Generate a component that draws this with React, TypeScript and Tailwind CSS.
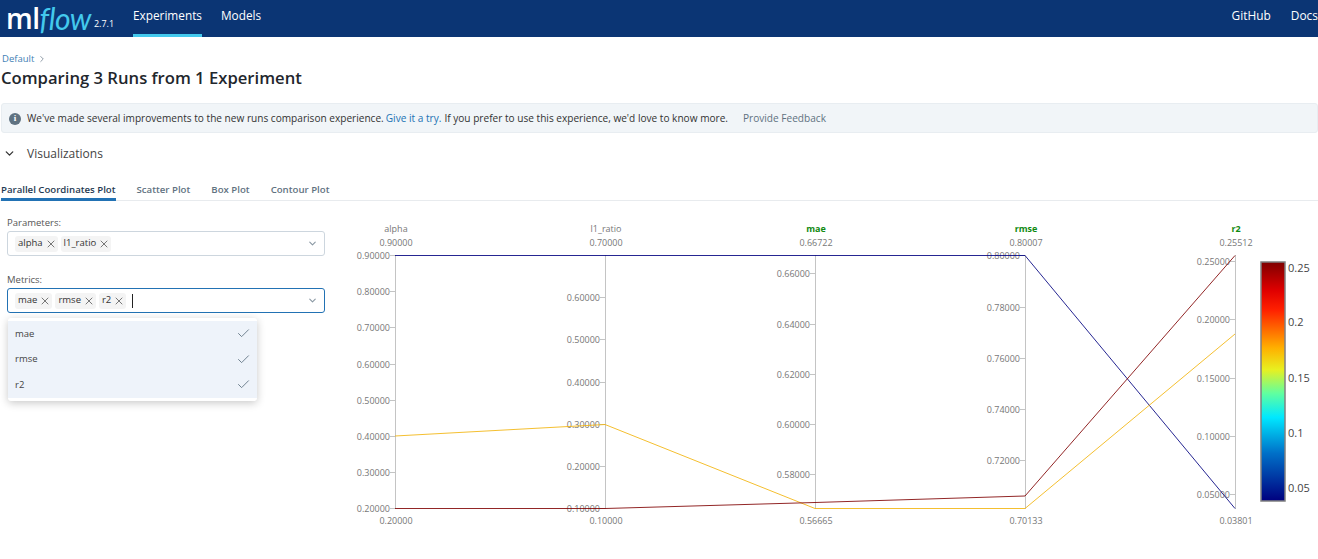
import { Check, ChevronDown, ChevronRight, X } from "lucide-react";

const FONT = "font-['Open_Sans',sans-serif]";

const TABS = ["Parallel Coordinates Plot", "Scatter Plot", "Box Plot", "Contour Plot"];

/* ============================================================
   Plot data — axes and lines in svg coordinates
   ============================================================ */

const AXES = [
  {
    x: 395, name: "alpha", top: "0.90000", bottom: "0.20000", metric: false,
    ticks: [["0.90000", 255], ["0.80000", 291], ["0.70000", 327], ["0.60000", 364], ["0.50000", 400], ["0.40000", 436], ["0.30000", 472], ["0.20000", 508]],
  },
  {
    x: 605, name: "l1_ratio", top: "0.70000", bottom: "0.10000", metric: false,
    ticks: [["0.60000", 297], ["0.50000", 339], ["0.40000", 382], ["0.30000", 424], ["0.20000", 466], ["0.10000", 508]],
  },
  {
    x: 815, name: "mae", top: "0.66722", bottom: "0.56665", metric: true,
    ticks: [["0.66000", 273], ["0.64000", 324], ["0.62000", 374], ["0.60000", 424], ["0.58000", 474]],
  },
  {
    x: 1025, name: "rmse", top: "0.80007", bottom: "0.70133", metric: true,
    ticks: [["0.80000", 255], ["0.78000", 307], ["0.76000", 358], ["0.74000", 409], ["0.72000", 460]],
  },
  {
    x: 1235, name: "r2", top: "0.25512", bottom: "0.03801", metric: true,
    ticks: [["0.25000", 261], ["0.20000", 319], ["0.15000", 378], ["0.10000", 436], ["0.05000", 494]],
  },
] as const;

const LINES = [
  { color: "#00007f", points: "395,255.5 605,255.5 815,255.5 1025,255.5 1235,508.5" },
  { color: "#f2b40c", points: "395,436 605,424.5 815,508.5 1025,508.5 1235,334" },
  { color: "#7f0000", points: "395,508.5 605,508.5 815,502.5 1025,496 1235,255.5" },
];

const SCALE = [["0.25", 268], ["0.2", 322], ["0.15", 378], ["0.1", 433], ["0.05", 488]] as const;

function ParallelPlot() {
  return (
    <svg width="1318" height="358" viewBox="0 201 1318 358" className="block" aria-hidden="true">
      <defs>
        <linearGradient id="jet" x1="0" y1="0" x2="0" y2="1">
          <stop offset="0" stopColor="#7f0000" />
          <stop offset="0.12" stopColor="#e00000" />
          <stop offset="0.2" stopColor="#ff2000" />
          <stop offset="0.36" stopColor="#ffb000" />
          <stop offset="0.45" stopColor="#e8f020" />
          <stop offset="0.55" stopColor="#60ffa0" />
          <stop offset="0.65" stopColor="#00e8ff" />
          <stop offset="0.8" stopColor="#0070c8" />
          <stop offset="1" stopColor="#00007f" />
        </linearGradient>
      </defs>
      {AXES.map((axis) => (
        <g key={axis.name} fontFamily="'Open Sans', sans-serif" fontSize="9" fill="#777">
          <line x1={axis.x + 0.5} y1="255" x2={axis.x + 0.5} y2="509" stroke="#c4c4c4" />
          <text x={axis.x + 1} y="232" textAnchor="middle" fill={axis.metric ? "#118a11" : "#777"} fontWeight={axis.metric ? 700 : 400}>
            {axis.name}
          </text>
          <text x={axis.x + 1} y="246" textAnchor="middle">{axis.top}</text>
          <text x={axis.x + 1} y="524" textAnchor="middle">{axis.bottom}</text>
          {axis.ticks.map(([label, y]) => (
            <g key={label}>
              <line x1={axis.x - 5} y1={y + 0.5} x2={axis.x} y2={y + 0.5} stroke="#c4c4c4" />
              <text x={axis.x - 5} y={y + 3.5} textAnchor="end">{label}</text>
            </g>
          ))}
        </g>
      ))}
      {LINES.map((line) => (
        <polyline key={line.color} points={line.points} fill="none" stroke={line.color} strokeWidth="1" strokeOpacity="0.85" />
      ))}
      <rect x="1261" y="262" width="24" height="239" fill="url(#jet)" stroke="#808080" strokeWidth="1.5" />
      {SCALE.map(([label, y]) => (
        <text key={label} x="1288" y={y + 4} fontFamily="'Open Sans', sans-serif" fontSize="11" fill="#444">
          {label}
        </text>
      ))}
    </svg>
  );
}

/* ============================================================
   Multi select
   ============================================================ */

function Chip({ label }: { label: string }) {
  return (
    <span className="flex h-4 items-center gap-[2px] rounded-[3px] bg-[#f4f4f4] pl-[3px] pr-[1px] text-[9.5px] text-[#333]">
      {label}
      <X size={12} strokeWidth={1.3} className="text-[#333]" />
    </span>
  );
}

function Field({ label, chips, focused }: { label: string; chips: string[]; focused?: boolean }) {
  return (
    <div>
      <div className="mb-px text-[9.5px] leading-[14px] text-[#555]">{label}</div>
      <div
        className={`flex h-[25px] w-[318px] items-center gap-[3px] rounded-[3px] border pl-[7px] pr-[6px] ${
          focused ? "border-[#2272b4]" : "border-[#cdd6de]"
        }`}
      >
        {chips.map((chip) => (
          <Chip key={chip} label={chip} />
        ))}
        {focused && <span className="ml-[3px] h-[14px] w-px bg-[#222]" />}
        <ChevronDown size={11} strokeWidth={2.4} className="ml-auto text-[#8a98a3]" />
      </div>
    </div>
  );
}

function MetricsMenu() {
  return (
    <div className="absolute left-px top-[45px] z-10 w-[249px] rounded-[3px] bg-white py-[3px] shadow-[0_2px_8px_rgba(0,0,0,0.22)]">
      {["mae", "rmse", "r2"].map((metric) => (
        <div key={metric} className="flex h-[25.6px] items-center justify-between bg-[#eef3fa] pl-[7px] pr-[6px] text-[9.5px] text-[#444]">
          {metric}
          <Check size={15} strokeWidth={1.4} className="text-[#5f7281]" />
        </div>
      ))}
    </div>
  );
}

export default function App() {
  return (
    <div className={`h-[559px] w-[1318px] overflow-hidden bg-white ${FONT}`}>
      <header className="flex h-[37px] items-stretch bg-[#0b3574] text-white">
        <div className="flex w-[133px] items-center pl-[6px]">
          <span className="text-[28px] font-semibold leading-[37px] tracking-[-0.5px]">ml</span>
          <span className="font-['Lato',sans-serif] text-[30px] font-normal italic leading-[37px] tracking-[-0.5px] text-[#43c9ed]">flow</span>
          <span className="ml-[3px] mt-[11px] text-[9px]">2.7.1</span>
        </div>
        <nav className="flex gap-[19px] text-[11.8px]">
          <a className="flex items-center border-b-[3px] border-[#43c9ed] pb-[3px] pt-[1px]">Experiments</a>
          <a className="flex items-center border-b-[3px] border-transparent pb-[3px] pt-[1px]">Models</a>
        </nav>
        <div className="ml-auto flex shrink-0 items-center gap-[20px] pb-[6px] text-[11.9px]">
          <a>GitHub</a>
          <a>Docs</a>
        </div>
      </header>

      <div className="flex items-center pl-[2px] pt-[15px] text-[9.5px] leading-[13px] text-[#3f7fb5]">
        Default
        <ChevronRight size={10} strokeWidth={1.8} className="ml-[3px] text-[#6b7c8a]" />
      </div>
      <h1 className="pl-[1px] text-[16.65px] font-[560] leading-[26px] text-[#1f272d]">
        Comparing 3 Runs from 1 Experiment
      </h1>

      <div className="ml-[1px] mt-[12px] flex h-[30px] items-center rounded-[3px] border border-[#e8edf1] bg-[#f1f5f8] pl-[7px] pt-px text-[10.1px] text-[#333]">
        <span className="mr-[6px] flex h-[12px] w-[12px] items-center justify-center rounded-full bg-[#5f7281] font-['Liberation_Serif',serif] text-[9px] font-bold text-white">
          i
        </span>
        <span className="font-medium">We've made several improvements to the new runs comparison experience.</span>
        <span className="ml-[2px] text-[#2272b4]">Give it a try.</span>
        <span className="ml-[3px] font-medium">If you prefer to use this experience, we'd love to know more.</span>
        <span className="ml-[15px] text-[#5f7281]">Provide Feedback</span>
      </div>

      <div className="flex h-[41px] items-center pl-[3px] text-[12px] text-[#444]">
        <ChevronDown size={13} strokeWidth={2.4} className="text-[#333]" />
        <span className="ml-[11px]">Visualizations</span>
      </div>

      <div className="mt-[7px] flex h-[20px] gap-[21px] border-b border-[#e8ebee] pl-[1px] pt-[2px] text-[9.65px] font-semibold text-[#5f7281]">
        {TABS.map((tab, i) => (
          <span
            key={tab}
            className={i === 0 ? "h-[18px] border-b-[3px] border-[#2272b4] text-[#1f3a52]" : ""}
          >
            {tab}
          </span>
        ))}
      </div>

      <div className="relative h-[358px]">
        <div className="absolute inset-x-0 top-0">
          <ParallelPlot />
        </div>
        <div className="relative flex flex-col gap-[17px] pl-[7px] pt-[15px]">
          <Field label="Parameters:" chips={["alpha", "l1_ratio"]} />
          <div className="relative">
            <Field label="Metrics:" chips={["mae", "rmse", "r2"]} focused />
            <MetricsMenu />
          </div>
        </div>
      </div>
    </div>
  );
}
